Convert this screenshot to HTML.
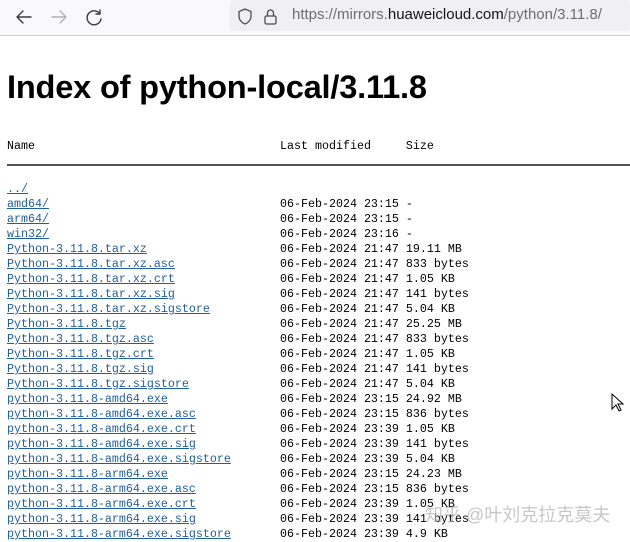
<!DOCTYPE html>
<html><head><meta charset="utf-8"><style>
body{margin:0;width:630px;height:541px;overflow:hidden;background:#fff;position:relative;font-family:"Liberation Sans",sans-serif}
.bar{position:absolute;left:0;top:0;width:630px;height:35px;background:#f9f9fb;border-bottom:1px solid #cfcfd8}
.url{position:absolute;left:230px;top:0;width:400px;height:31px;background:#f0f0f4;border-radius:4px}
.urltext{position:absolute;left:292px;top:6px;font-size:15px;color:#6d6d75;white-space:nowrap}
.urltext b{color:#15141a;font-weight:normal}
h1{position:absolute;left:7px;top:68px;margin:0;font-size:32.6px;font-weight:bold;color:#000;letter-spacing:-0.2px}
pre{position:absolute;margin:0;font-family:"Liberation Mono","DejaVu Sans Mono",monospace;font-size:11.67px;line-height:15px;color:#000}
a{color:#1f5f9f;text-decoration:underline}
hr{position:absolute;left:7px;top:164px;width:630px;margin:0;border:0;border-top:2px solid #555}
.wm{position:absolute;left:425px;top:501px;font-family:"Liberation Sans","Noto Sans CJK SC",sans-serif;font-size:18px;color:rgba(180,180,180,0.75)}
</style></head><body>
<div class="bar">
<svg style="position:absolute;left:14px;top:8px" width="90" height="18" viewBox="0 0 90 18" fill="none" stroke-width="1.4" stroke-linecap="round" stroke-linejoin="round">
<path d="M3 9H17M3 9L9 3M3 9L9 15" stroke="#3a3a40"/>
<path d="M38 9H52M52 9L46 3M52 9L46 15" stroke="#b0b0b8"/>
<path d="M86 6A7 7 0 1 0 87 11M86 2V6H82" stroke="#3a3a40"/>
</svg>
<div class="url"></div>
<svg style="position:absolute;left:236px;top:7px" width="50" height="20" viewBox="0 0 50 20" fill="none" stroke="#4a4a50" stroke-width="1.3">
<path d="M9 2L3 4.5V9C3 13 6 16 9 17C12 16 15 13 15 9V4.5Z"/>
<rect x="29" y="9" width="11" height="8" rx="1.5"/>
<path d="M31.5 9V6A3 3 0 0 1 37.5 6V9"/>
</svg>
<div class="urltext">https://mirrors.<b>huaweicloud.com</b>/python/3.11.8/</div>
</div>
<h1>Index of python-local/3.11.8</h1>
<pre style="top:139px;left:7px">Name</pre>
<pre style="top:139px;left:280px">Last modified     Size</pre>
<hr>
<pre style="top:182px;left:7px"><a>../</a>
<a>amd64/</a>
<a>arm64/</a>
<a>win32/</a>
<a>Python-3.11.8.tar.xz</a>
<a>Python-3.11.8.tar.xz.asc</a>
<a>Python-3.11.8.tar.xz.crt</a>
<a>Python-3.11.8.tar.xz.sig</a>
<a>Python-3.11.8.tar.xz.sigstore</a>
<a>Python-3.11.8.tgz</a>
<a>Python-3.11.8.tgz.asc</a>
<a>Python-3.11.8.tgz.crt</a>
<a>Python-3.11.8.tgz.sig</a>
<a>Python-3.11.8.tgz.sigstore</a>
<a>python-3.11.8-amd64.exe</a>
<a>python-3.11.8-amd64.exe.asc</a>
<a>python-3.11.8-amd64.exe.crt</a>
<a>python-3.11.8-amd64.exe.sig</a>
<a>python-3.11.8-amd64.exe.sigstore</a>
<a>python-3.11.8-arm64.exe</a>
<a>python-3.11.8-arm64.exe.asc</a>
<a>python-3.11.8-arm64.exe.crt</a>
<a>python-3.11.8-arm64.exe.sig</a>
<a>python-3.11.8-arm64.exe.sigstore</a></pre>
<pre style="top:197px;left:280px">06-Feb-2024 23:15 -
06-Feb-2024 23:15 -
06-Feb-2024 23:16 -
06-Feb-2024 21:47 19.11 MB
06-Feb-2024 21:47 833 bytes
06-Feb-2024 21:47 1.05 KB
06-Feb-2024 21:47 141 bytes
06-Feb-2024 21:47 5.04 KB
06-Feb-2024 21:47 25.25 MB
06-Feb-2024 21:47 833 bytes
06-Feb-2024 21:47 1.05 KB
06-Feb-2024 21:47 141 bytes
06-Feb-2024 21:47 5.04 KB
06-Feb-2024 23:15 24.92 MB
06-Feb-2024 23:15 836 bytes
06-Feb-2024 23:39 1.05 KB
06-Feb-2024 23:39 141 bytes
06-Feb-2024 23:39 5.04 KB
06-Feb-2024 23:15 24.23 MB
06-Feb-2024 23:15 836 bytes
06-Feb-2024 23:39 1.05 KB
06-Feb-2024 23:39 141 bytes
06-Feb-2024 23:39 4.9 KB</pre>
<svg style="position:absolute;left:611px;top:393px" width="14" height="20" viewBox="0 0 14 20"><path d="M1 1V16L5 12L8 18L10 17L7 11H12Z" fill="#fff" stroke="#000" stroke-width="1"/></svg>
<div class="wm">知乎 @叶刘克拉克莫夫</div>
</body></html>
